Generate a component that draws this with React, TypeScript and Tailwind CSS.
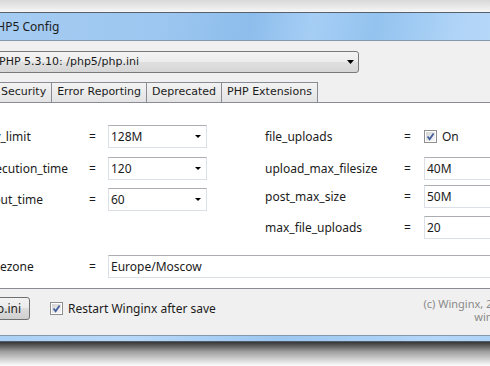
import React from "react";

// Win7-style "PHP5 Config" window, cropped on both sides like the screenshot

function Arrow({ w = 7, h = 4 }: { w?: number; h?: number }) {
  return (
    <svg width={w} height={h} viewBox={`0 0 ${w} ${h}`} className="shrink-0">
      <path d={`M0 0H${w}L${w / 2} ${h}Z`} fill="#000" />
    </svg>
  );
}

function Check() {
  return (
    <span className="flex h-[13px] w-[13px] shrink-0 border border-[#8f8f8f] bg-white p-px">
      <span className="flex flex-1 items-center justify-center bg-gradient-to-br from-[#d3d3d3] to-[#f7f7f7]">
        <svg width="9" height="9" viewBox="0 0 9 9">
          <path d="M1.6 4.6L3.6 7.2L7.6 1.4" fill="none" stroke="#3f5c9c" strokeWidth="1.7" />
        </svg>
      </span>
    </span>
  );
}

function Field({ value, arrow, w }: { value: string; arrow?: boolean; w: string }) {
  return (
    <div
      className={`flex h-[23px] ${w} items-center justify-between border border-[#dbdfe6] border-t-[#abadb3] bg-white pl-[2px] pr-[5px]`}
    >
      <span>{value}</span>
      {arrow && <Arrow w={6} h={3} />}
    </div>
  );
}

function Row({
  label,
  labelW,
  eqW,
  className = "",
  children,
}: {
  label: string;
  labelW: string;
  eqW: string;
  className?: string;
  children: React.ReactNode;
}) {
  return (
    <div className={`flex h-[23px] items-center ${className}`}>
      <span className={`${labelW} shrink-0`}>{label}</span>
      <span className={`${eqW} shrink-0`}>=</span>
      {children}
    </div>
  );
}

const tabs = ["Security", "Error Reporting", "Deprecated", "PHP Extensions"];

export default function App() {
  return (
    <div className="h-[366px] w-[490px] overflow-hidden bg-white font-['Noto_Sans',sans-serif] text-[12px] text-[#1b1b1b]">
      <div className="-ml-[60px] w-[620px]">
        {/* above the window */}
        <div className="h-[12px] bg-gradient-to-b from-[#d8d8d8] to-[#f6f6f6]" />

        {/* Title bar */}
        <div className="flex h-[29px] items-center border-y border-t-[#56616d] border-b-[#8499ae] bg-[linear-gradient(100deg,#a8cdf2_0%,#9dc7f0_35%,#8dbdec_50%,#a6cef5_60%,#93c3ef_70%,#b3d6f8_85%,#badbf9_100%)] pl-[49px]">
          <span>PHP5 Config</span>
        </div>

        {/* Client area */}
        <div className="bg-[#f0f0f0] pt-[10px]">
          {/* Version select */}
          <div className="ml-[54px] flex h-[22px] w-[365px] items-center justify-between rounded-[3px] border border-[#7a7a7a] bg-[linear-gradient(#f4f4f4,#ececec_50%,#e0e0e0_50%,#d6d6d6)] pl-[4px] pr-[4px] font-['DejaVu_Sans',sans-serif] text-[11px]">
            <span>PHP 5.3.10: /php5/php.ini</span>
            <Arrow />
          </div>

          {/* Tabs */}
          <div className="ml-[55px] mt-[9px] flex h-[20px] font-['DejaVu_Sans',sans-serif] text-[11px]">
            {tabs.map((t, i) => (
              <div
                key={t}
                className={`flex items-center border border-b-0 border-[#898c95] bg-gradient-to-b from-[#f3f3f3] to-[#e3e3e3] px-[5px] ${
                  i > 0 ? "-ml-px" : ""
                }`}
              >
                {t}
              </div>
            ))}
          </div>

          {/* Panel */}
          <div className="mx-[8px] h-[187px] border border-[#898c95] bg-white pl-[4px] pt-[22px]">
            <div className="flex items-start">
              <div className="flex flex-col">
                <Row label="memory_limit" labelW="w-[136px]" eqW="w-[19px]">
                  <Field value="128M" arrow w="w-[99px]" />
                </Row>
                <Row label="max_execution_time" labelW="w-[136px]" eqW="w-[19px]" className="mt-[9px]">
                  <Field value="120" arrow w="w-[99px]" />
                </Row>
                <Row label="max_input_time" labelW="w-[136px]" eqW="w-[19px]" className="mt-[8px]">
                  <Field value="60" arrow w="w-[99px]" />
                </Row>
              </div>

              <div className="ml-[58px] flex flex-col">
                <Row label="file_uploads" labelW="w-[139px]" eqW="w-[20px]">
                  <Check />
                  <span className="ml-[5px]">On</span>
                </Row>
                <Row label="upload_max_filesize" labelW="w-[139px]" eqW="w-[20px]" className="mt-[9px]">
                  <Field value="40M" w="w-[90px]" />
                </Row>
                <Row label="post_max_size" labelW="w-[139px]" eqW="w-[20px]" className="mt-[5px]">
                  <Field value="50M" w="w-[90px]" />
                </Row>
                <Row label="max_file_uploads" labelW="w-[139px]" eqW="w-[20px]" className="mt-[8px]">
                  <Field value="20" w="w-[90px]" />
                </Row>
              </div>
            </div>

            <Row label="date.timezone" labelW="w-[136px]" eqW="w-[19px]" className="mt-[16px]">
              <Field value="Europe/Moscow" w="w-[430px]" />
            </Row>
          </div>

          {/* Bottom bar */}
          <div className="flex h-[46px] items-start pl-[11px] pr-[20px] pt-[8px]">
            <button className="flex h-[23px] w-[79px] items-center justify-end whitespace-nowrap rounded-[3px] border border-[#707070] bg-[linear-gradient(#f2f2f2,#ebebeb_50%,#dddddd_50%,#cfcfcf)] pr-[8px]">
              Save php.ini
            </button>
            <div className="ml-[20px] flex h-[23px] items-center gap-[5px]">
              <Check />
              <span>Restart Winginx after save</span>
            </div>
            <div className="ml-auto text-right text-[11px] leading-[13px] text-[#8a8a8a]">
              <div>(c) Winginx, 2010-2012</div>
              <div>winginx.com</div>
            </div>
          </div>
        </div>

        {/* Bottom frame */}
        <div className="h-[7px] border-y border-t-[#8499ae] border-b-[#4d5b6a] bg-[linear-gradient(90deg,#a4ccf3,#b8d8f8_30%,#9cc7f1_55%,#b4d6f8_80%,#a8cff5)]" />

        {/* Shadow */}
        <div className="h-[24px] bg-gradient-to-b from-[#363636] via-[#9f9f9f] via-40% to-white" />
      </div>
    </div>
  );
}
